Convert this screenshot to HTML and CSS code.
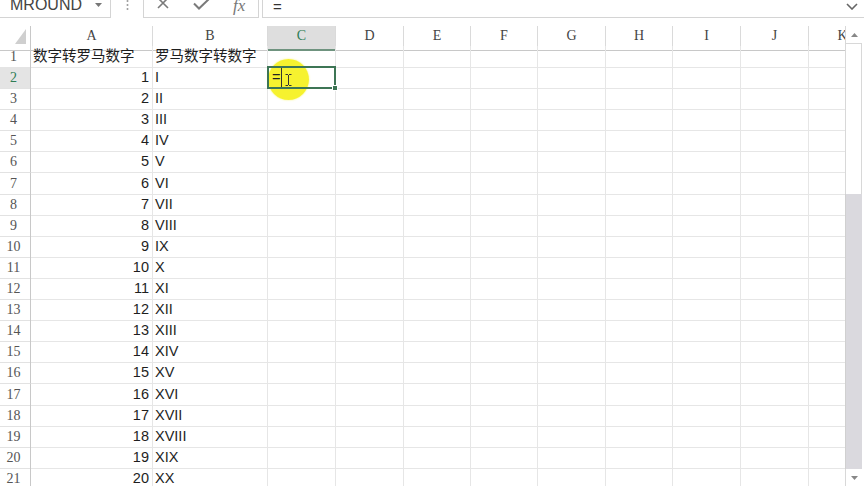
FILE: index.html
```html
<!DOCTYPE html>
<html lang="zh">
<head>
  <meta charset="UTF-8">
  <title>Excel - 数字转罗马数字</title>
  <link rel="stylesheet" href="styles.css">
</head>
<body>
  <div class="toolbar">
    <div class="namebox">
      <span class="name">MROUND</span>
      <svg class="drop" width="7" height="4" viewBox="0 0 7 4"><path d="M0 0h7L3.5 4z" fill="#777"/></svg>
    </div>
    <div class="dots">
      <svg width="3" height="10" viewBox="0 0 3 10"><circle cx="1.5" cy="1" r="1" fill="#999"/><circle cx="1.5" cy="5" r="1" fill="#999"/><circle cx="1.5" cy="9" r="1" fill="#999"/></svg>
    </div>
    <div class="fxbox">
      <svg class="icon-x" width="12" height="12" viewBox="0 0 12 12"><path d="M1 1l10 10M11 1L1 11" stroke="#7a7a7a" stroke-width="1.6" fill="none"/></svg>
      <svg class="icon-ok" width="18" height="13" viewBox="0 0 18 13"><path d="M1 6.5l5 5L17 1" stroke="#7a7a7a" stroke-width="2" fill="none"/></svg>
      <span class="fx">fx</span>
    </div>
    <div class="formula">
      <span class="value">=</span>
      <svg class="chev" width="12" height="7" viewBox="0 0 12 7"><path d="M1 1l5 5 5-5" stroke="#666" stroke-width="1.6" fill="none"/></svg>
    </div>
  </div>

  <div class="workspace">
    <div class="sheet">
      <div class="row head">
        <div class="corner">
          <svg width="30" height="19" viewBox="0 0 30 19"><path d="M15 18h11V3z" fill="#cfcfcf"/></svg>
        </div>
        <div>A</div><div>B</div><div class="active">C</div><div>D</div><div>E</div>
        <div>F</div><div>G</div><div>H</div><div>I</div><div>J</div><div>K</div>
      </div>
      <div id="rows"></div>
    </div>
    <div class="vscroll">
      <div class="arrow">
        <svg width="7" height="4" viewBox="0 0 7 4"><path d="M0 4h7L3.5 0z" fill="#888"/></svg>
      </div>
      <div class="track"></div>
      <div class="thumb"></div>
      <div class="arrow">
        <svg width="7" height="4" viewBox="0 0 7 4"><path d="M0 0h7L3.5 4z" fill="#888"/></svg>
      </div>
    </div>
  </div>

  <script>
    const romans = ['I','II','III','IV','V','VI','VII','VIII','IX','X',
                    'XI','XII','XIII','XIV','XV','XVI','XVII','XVIII','XIX','XX'];
    const rows = document.getElementById('rows');

    for (let r = 1; r <= 21; r++) {
      const row = document.createElement('div');
      row.className = 'row';
      let a = '', b = '';
      if (r === 1) {
        a = '数字转罗马数字';
        b = '罗马数字转数字';
      } else {
        a = r - 1;
        b = romans[r - 2];
      }
      let html = `<div class="rowhead${r === 2 ? ' active' : ''}">${r}</div>`;
      html += `<div class="cell ${r === 1 ? 'text' : 'num'}">${a}</div>`;
      html += `<div class="cell text">${b}</div>`;
      if (r === 2) {
        // the cell being edited, with the yellow mouse highlight
        html += `<div class="cell editing">
          <div class="spot"></div>
          <div class="selection"><span class="eq">=</span><span class="caret"></span><span class="handle"></span></div>
          <svg class="ibeam" width="7" height="12" viewBox="0 0 7 12"><path d="M0.5 0.5h2.5M4 0.5h2.5M3.5 1v10M0.5 11.5h2.5M4 11.5h2.5" stroke="#333" stroke-width="1" fill="none"/></svg>
        </div>`;
      } else {
        html += '<div class="cell"></div>';
      }
      for (let c = 0; c < 8; c++) html += '<div class="cell"></div>';
      row.innerHTML = html;
      rows.appendChild(row);
    }
  </script>
</body>
</html>
```

FILE: styles.css
```css
body {
  margin: 0;
  height: 486px;
  overflow: hidden;
  background: #fff;
  color: #1e1e1e;
  font-family: "Liberation Sans", "Noto Sans CJK SC", sans-serif;
}

/* formula bar (top part is cut off in the frame) */
.toolbar {
  display: flex;
  height: 18px;
  overflow: hidden;
}
.namebox {
  width: 111px;
  box-sizing: border-box;
  display: flex;
  justify-content: space-between;
  align-items: flex-end;
  padding: 0 8px 6px 10px;
  border-right: 1px solid #d4d4d4;
  border-bottom: 1px solid #d4d4d4;
}
.namebox .name {
  font-size: 16px;
  line-height: 12px;
  color: #444;
}
.namebox .drop {
  align-self: flex-start;
  margin-top: 3px;
}
.dots {
  width: 32px;
  display: flex;
  justify-content: center;
}
.fxbox {
  width: 116px;
  box-sizing: border-box;
  display: flex;
  align-items: flex-start;
  border-left: 1px solid #d4d4d4;
  border-right: 1px solid #d4d4d4;
  border-bottom: 1px solid #d4d4d4;
}
.icon-x {
  margin: -3px 0 0 13px;
}
.icon-ok {
  margin: -3px 0 0 24px;
}
.fx {
  margin: 0 0 0 22px;
  font-family: "Liberation Serif", serif;
  font-style: italic;
  font-size: 17px;
  line-height: 12px;
  color: #777;
}
.formula {
  flex: 1;
  margin-left: 3px;
  display: flex;
  justify-content: space-between;
  align-items: flex-start;
  padding: 0 6px 0 10px;
  border-left: 1px solid #d4d4d4;
  border-bottom: 1px solid #d4d4d4;
}
.formula .value {
  font-size: 15px;
  line-height: 14px;
  color: #333;
}
.formula .chev {
  margin-top: 3px;
}

/* worksheet */
.workspace {
  display: flex;
  margin-top: 8px;
  height: 460px;
}
.sheet {
  flex: 1;
  overflow: hidden;
}
.row {
  display: grid;
  grid-template-columns: 31px 122px 115px 68px 68px 67px 67px 68px 67px 68px 68px 68px;
  width: 877px;
  height: 21.1px;
}
.row > div {
  box-sizing: border-box;
  border-right: 1px solid #e6e6e6;
  border-bottom: 1px solid #e6e6e6;
  white-space: nowrap;
}
.row.head {
  height: 20px;
}
.row.head > div {
  border-right-color: #dadada;
  border-bottom-color: #c8c8c8;
  text-align: center;
  font-family: "Liberation Serif", serif;
  font-size: 14px;
  line-height: 19px;
  color: #444;
}
.row.head > div.corner {
  border-right-color: #c8c8c8;
}
.row.head > div.active {
  background: #dedede;
  color: #2f7d55;
  border-bottom: 2px solid #6f937f;
}
.rowhead {
  text-align: center;
  padding-right: 3px;
  font-family: "Liberation Serif", serif;
  font-size: 14px;
  line-height: 21px;
  color: #555;
}
.row > div.rowhead {
  border-right-color: #c8c8c8;
  border-bottom-color: #e2e2e2;
}
.rowhead.active {
  background: #e4e4e4;
  color: #2f7d55;
}
.cell {
  font-size: 14.5px;
  line-height: 21px;
}
.cell.num {
  text-align: right;
  padding-right: 3px;
}
.cell.text {
  padding-left: 2px;
}

/* edited cell C2 */
.cell.editing {
  position: relative;
}
.spot {
  position: absolute;
  left: 0;
  top: -8px;
  width: 41px;
  height: 41px;
  border-radius: 50%;
  background: rgba(244, 240, 10, 0.85);
  box-shadow: 0 0 2px rgba(244, 240, 10, 0.6);
  z-index: 1;
}
.selection {
  position: absolute;
  left: -1px;
  top: -1px;
  right: -1px;
  bottom: -1px;
  border: 2px solid #3d7555;
  z-index: 2;
}
.selection .eq {
  position: absolute;
  left: 3px;
  top: -1px;
  line-height: 21px;
  font-size: 14.5px;
  color: #222;
}
.selection .caret {
  position: absolute;
  left: 12px;
  top: 0;
  bottom: 0;
  border-left: 1px solid #333;
}
.selection .handle {
  position: absolute;
  right: -4px;
  bottom: -4px;
  width: 4px;
  height: 4px;
  background: #3d7555;
  border: 1px solid #fff;
}
.ibeam {
  position: absolute;
  left: 17px;
  top: 7px;
  z-index: 3;
}

/* vertical scrollbar */
.vscroll {
  width: 19px;
  display: flex;
  flex-direction: column;
  padding-right: 2px;
  box-sizing: border-box;
}
.vscroll .arrow {
  height: 17px;
  display: flex;
  align-items: center;
  justify-content: center;
  border-left: 1px solid #d8d8d8;
}
.vscroll .track {
  height: 150px;
  border: 1px solid #d8d8d8;
  border-bottom: none;
}
.vscroll .thumb {
  flex: 1;
  background: #dad9de;
  border-left: 1px solid #d0d0d0;
}
```
